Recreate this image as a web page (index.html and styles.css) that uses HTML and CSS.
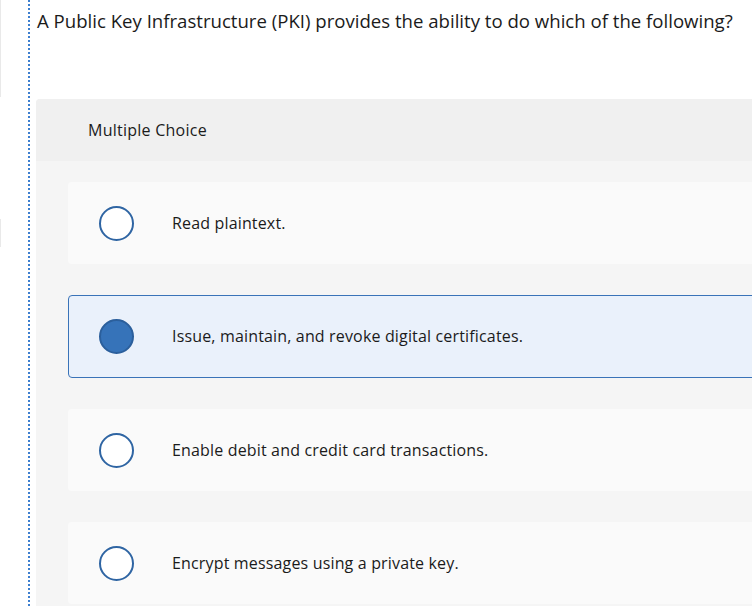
FILE: index.html
```html
<!DOCTYPE html>
<html>
<head>
<meta charset="utf-8">
<link rel="stylesheet" href="styles.css">
</head>
<body>
<div class="page">
  <div class="rail">
    <div class="rail-mark rail-mark-top"></div>
    <div class="rail-mark rail-mark-mid"></div>
  </div>
  <div class="dots"></div>
  <div class="content">
    <div class="question">A Public Key Infrastructure (PKI) provides the ability to do which of the following?</div>
    <div class="panel">
      <div class="panel-head">Multiple Choice</div>
      <div class="panel-body">
        <div class="choice">
          <span class="radio"></span>
          <span class="label">Read plaintext.</span>
        </div>
        <div class="choice selected">
          <span class="radio"></span>
          <span class="label">Issue, maintain, and revoke digital certificates.</span>
        </div>
        <div class="choice">
          <span class="radio"></span>
          <span class="label">Enable debit and credit card transactions.</span>
        </div>
        <div class="choice">
          <span class="radio"></span>
          <span class="label">Encrypt messages using a private key.</span>
        </div>
      </div>
    </div>
  </div>
</div>
</body>
</html>
```

FILE: styles.css
```css
html, body {
  margin: 0;
  padding: 0;
  background: #ffffff;
  overflow: hidden;
}
body {
  width: 752px;
  height: 606px;
  font-family: "Open Sans", "Liberation Sans", sans-serif;
  color: #1b1b1b;
}
.page {
  display: flex;
  height: 606px;
}
.rail {
  width: 28px;
  display: flex;
  flex-direction: column;
}
.rail-mark {
  width: 1px;
  background: #e9e9e9;
}
.rail-mark-top {
  height: 97px;
}
.rail-mark-mid {
  height: 28px;
  margin-top: 122px;
}
.dots {
  width: 0;
  border-left: 2px dotted #3d7fcf;
  height: 606px;
}
.content {
  flex: 1;
  padding-left: 6px;
  display: flex;
  flex-direction: column;
}
.question {
  height: 99px;
  box-sizing: border-box;
  padding: 9px 0 0 1px;
  font-size: 18.6px;
  line-height: 24px;
  white-space: nowrap;
}
.panel {
  flex: 1;
  background: #f5f5f5;
  border-top-left-radius: 4px;
}
.panel-head {
  height: 62px;
  display: flex;
  align-items: center;
  padding-left: 52px;
  padding-bottom: 1px;
  box-sizing: border-box;
  background: #f0f0f0;
  border-top-left-radius: 4px;
  font-size: 16px;
  letter-spacing: 0.25px;
}
.panel-body {
  padding: 21px 0 0 32px;
  display: flex;
  flex-direction: column;
  gap: 31px;
}
.choice {
  height: 82px;
  box-sizing: border-box;
  margin-right: -20px;
  background: #fafafa;
  border-radius: 4px;
  border: 1px solid transparent;
  display: flex;
  align-items: center;
  padding-left: 30px;
  padding-bottom: 1px;
}
.choice.selected {
  height: 83px;
  background: #eaf1fb;
  border-color: #3a73b8;
}
.radio {
  width: 35px;
  height: 35px;
  box-sizing: border-box;
  border-radius: 50%;
  border: 2px solid #2f65a3;
  background: #ffffff;
  flex: none;
  margin-top: 1px;
}
.choice.selected .radio {
  background: #3673b9;
  border-color: #2b5f9c;
}
.label {
  margin-left: 38px;
  font-size: 16px;
  letter-spacing: 0.16px;
}
```
